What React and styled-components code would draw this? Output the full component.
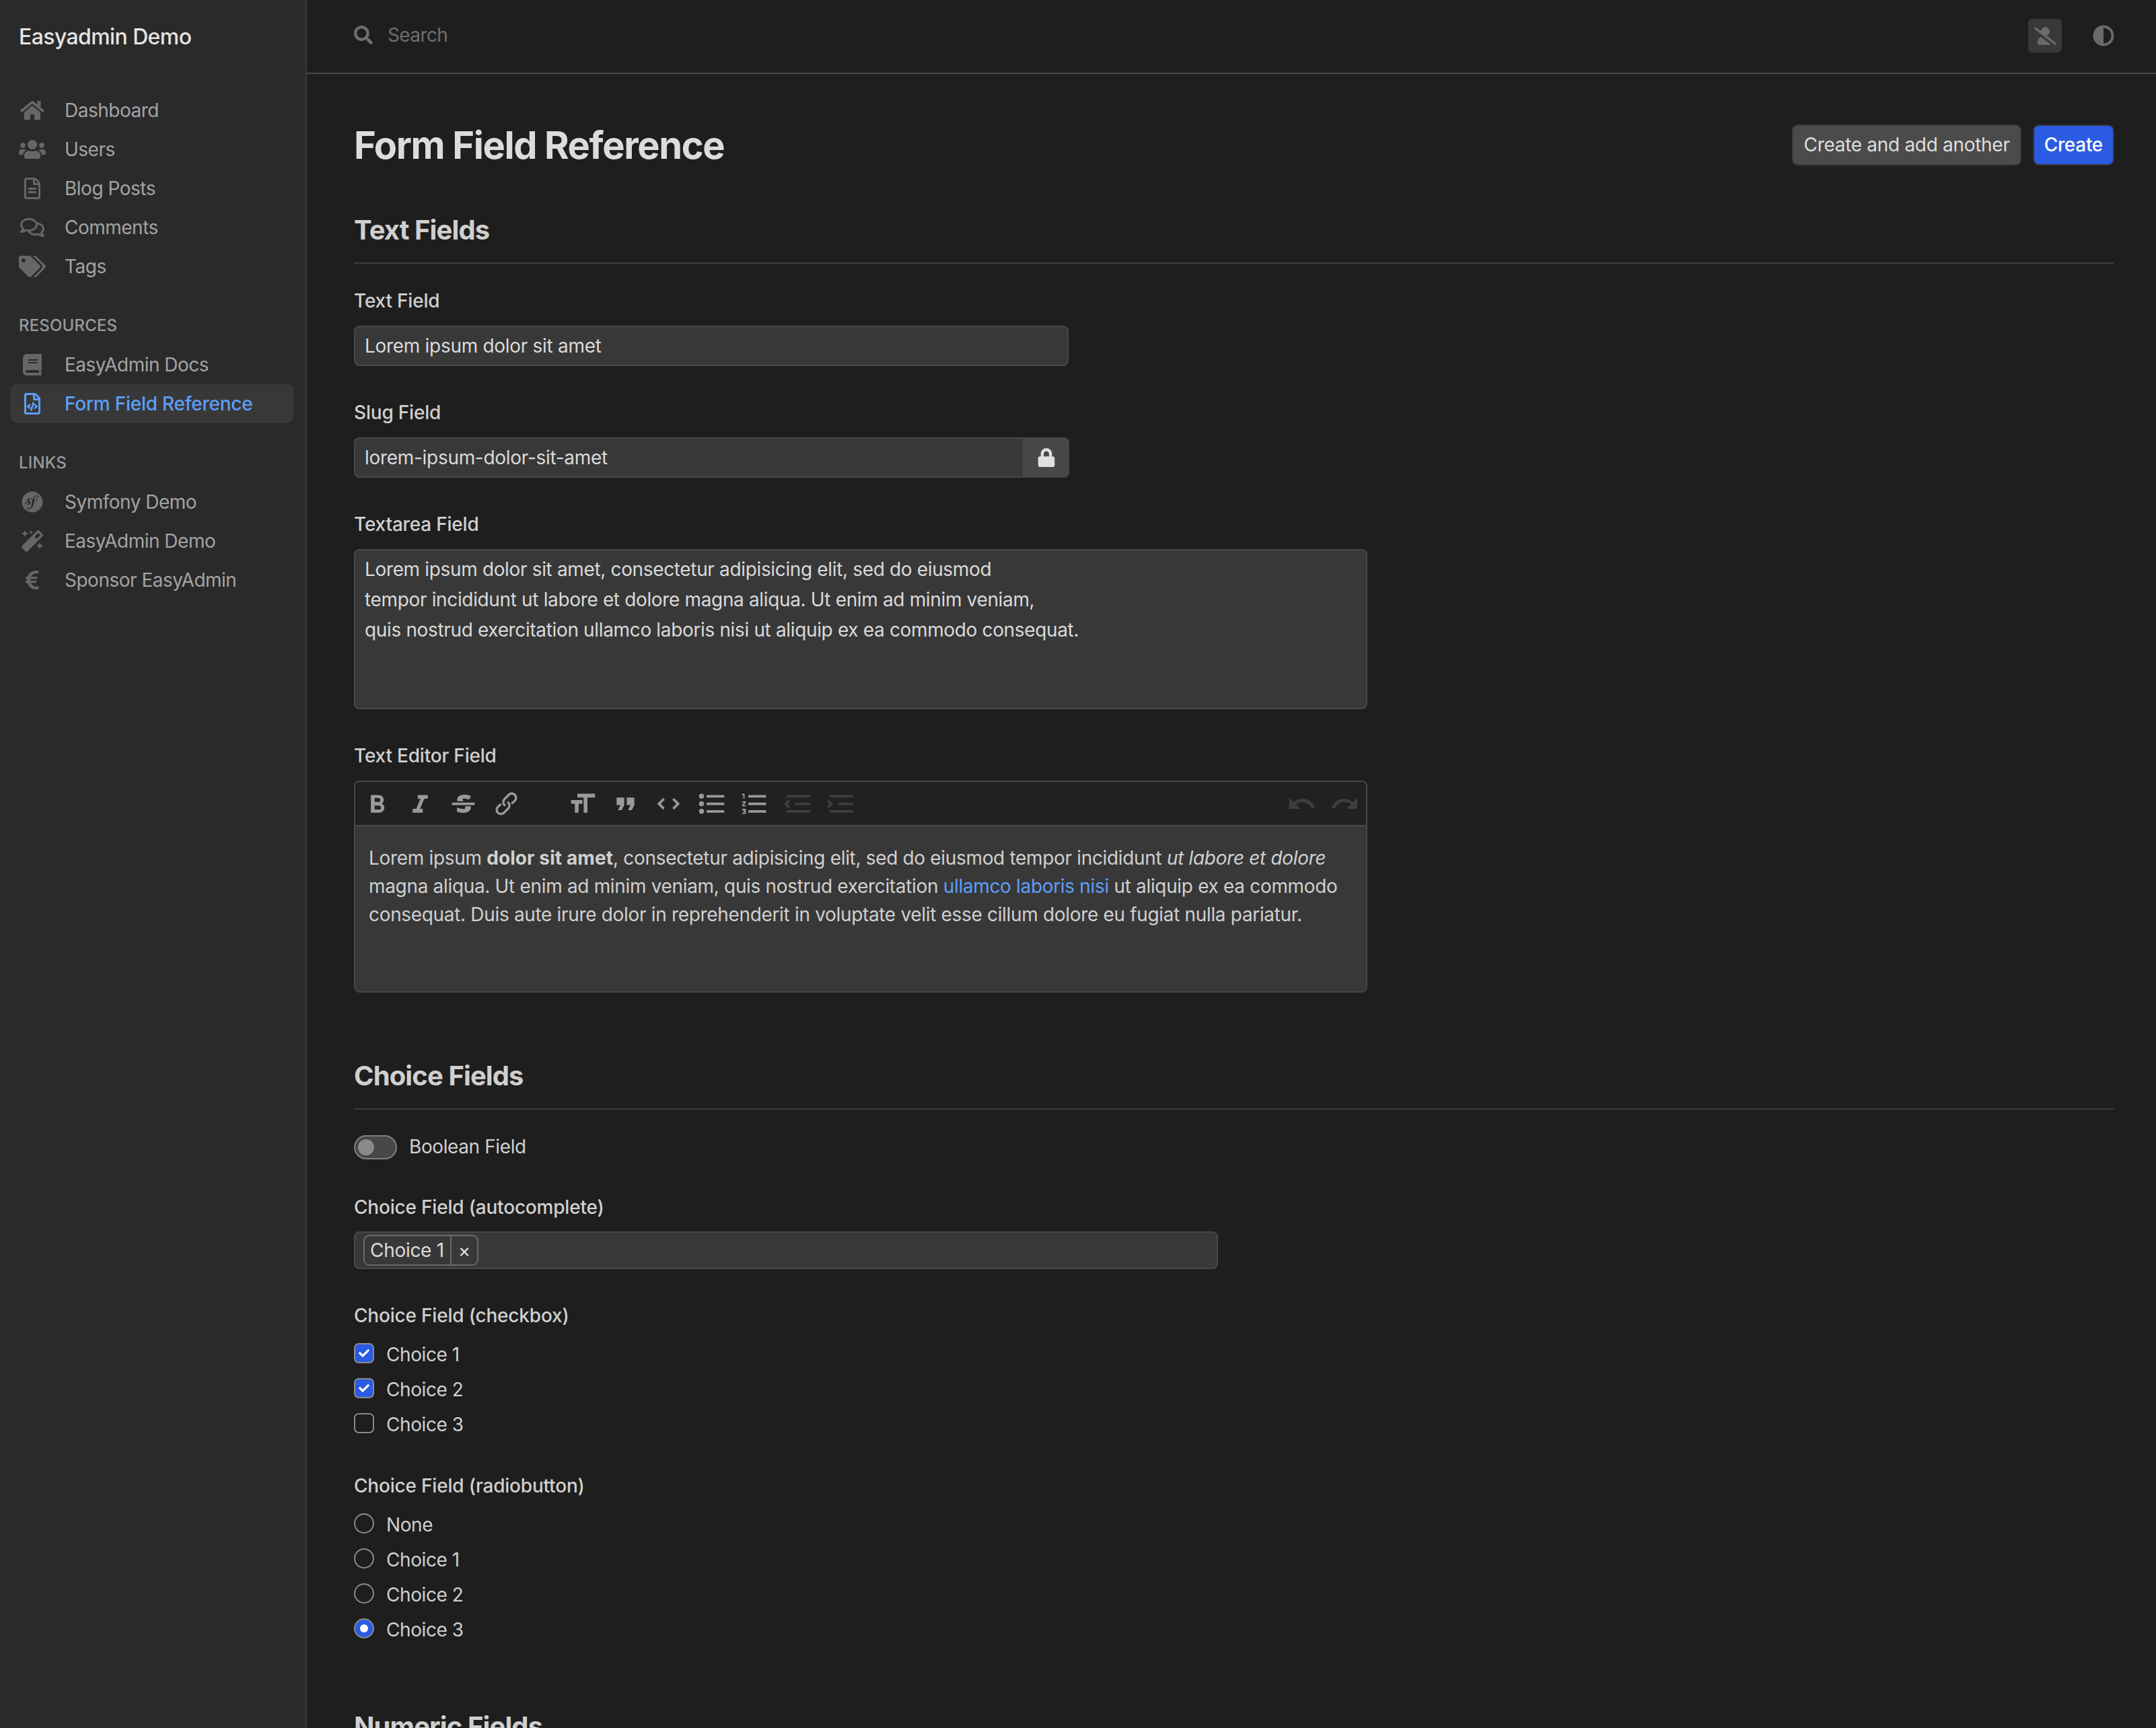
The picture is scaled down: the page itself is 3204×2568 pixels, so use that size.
import styled, { createGlobalStyle } from 'styled-components';
import {
  FaHome,
  FaUsers,
  FaRegFileAlt,
  FaRegComments,
  FaTags,
  FaBook,
  FaRegFileCode,
  FaSymfony,
  FaMagic,
  FaEuroSign,
  FaSearch,
  FaUserSlash,
  FaAdjust,
  FaLock,
  FaCheck
} from 'react-icons/fa';

const GlobalStyle = createGlobalStyle`
  html, body {
    margin: 0;
    padding: 0;
    height: 100%;
    overflow: hidden;
    background: #1e1e1e;
  }
  * {
    box-sizing: border-box;
  }
  body {
    font-family: Inter, 'Liberation Sans', sans-serif;
    font-size: 28px;
    letter-spacing: -0.3px;
    color: #d4d4d4;
  }
`;

const menu = [
  {
    items: [
      { icon: FaHome, label: 'Dashboard', size: 36 },
      { icon: FaUsers, label: 'Users', size: 40 },
      { icon: FaRegFileAlt, label: 'Blog Posts', size: 32 },
      { icon: FaRegComments, label: 'Comments', size: 36 },
      { icon: FaTags, label: 'Tags', size: 40 }
    ]
  },
  {
    title: 'Resources',
    items: [
      { icon: FaBook, label: 'EasyAdmin Docs', size: 32 },
      { icon: FaRegFileCode, label: 'Form Field Reference', size: 32, active: true }
    ]
  },
  {
    title: 'Links',
    items: [
      { icon: FaSymfony, label: 'Symfony Demo', size: 32 },
      { icon: FaMagic, label: 'EasyAdmin Demo', size: 32 },
      { icon: FaEuroSign, label: 'Sponsor EasyAdmin', size: 32 }
    ]
  }
];

const trix = {
  bold: 'M15.6 11.8c1-.7 1.6-1.8 1.6-2.8a4 4 0 0 0-4-4H7v14h7c2.1 0 3.7-1.7 3.7-3.8 0-1.5-.8-2.8-2.1-3.4zM10 7.5h3a1.5 1.5 0 1 1 0 3h-3v-3zm3.5 9H10v-3h3.5a1.5 1.5 0 1 1 0 3z',
  italic: 'M10 5v3h2.2l-3.4 8H6v3h8v-3h-2.2l3.4-8H18V5h-8z',
  strike:
    'M12.73 14l.28.14c.26.15.45.3.57.44.12.14.18.3.18.5 0 .3-.15.56-.44.75-.3.2-.76.3-1.39.3A13.52 13.52 0 0 1 7 14.95v3.37a10.64 10.64 0 0 0 4.84.88c1.26 0 2.35-.19 3.28-.56.93-.37 1.64-.9 2.14-1.57s.74-1.45.74-2.32c0-.26-.02-.51-.06-.75h-5.21zm-5.5-4c-.08-.34-.12-.7-.12-1.1 0-1.29.52-2.3 1.58-3.02 1.05-.72 2.5-1.08 4.34-1.08 1.62 0 3.28.34 4.97 1l-1.3 2.93c-1.47-.6-2.73-.9-3.8-.9-.55 0-.96.08-1.2.26-.26.17-.38.38-.38.64 0 .27.16.52.48.74.17.12.53.3 1.05.53H7.23zM3 13h18v-2H3v2z',
  link: 'M9.88 13.7a4.3 4.3 0 0 1 0-6.07l3.37-3.37a4.26 4.26 0 0 1 6.07 0 4.3 4.3 0 0 1 0 6.06l-1.96 1.72a.91.91 0 1 1-1.3-1.3l1.97-1.71a2.46 2.46 0 0 0-3.48-3.48l-3.38 3.37a2.46 2.46 0 0 0 0 3.48.91.91 0 1 1-1.29 1.3zm4.24-3.36a4.3 4.3 0 0 1 0 6.07l-3.37 3.37a4.26 4.26 0 0 1-6.07 0 4.3 4.3 0 0 1 0-6.06l1.96-1.72a.91.91 0 1 1 1.3 1.3l-1.97 1.71a2.46 2.46 0 0 0 3.48 3.48l3.38-3.37a2.46 2.46 0 0 0 0-3.48.91.91 0 1 1 1.29-1.3z',
  heading: 'M12 9v3H9v7H6v-7H3V9h9zM8 4h14v3h-6v12h-3V7H8V4z',
  quote: 'M6 17h3l2-4V7H5v6h3zm8 0h3l2-4V7h-6v6h3z',
  code: 'M18.2 12L15 15.2l1.4 1.4L21 12l-4.6-4.6L15 8.8l3.2 3.2zM5.8 12L9 8.8 7.6 7.4 3 12l4.6 4.6L9 15.2 5.8 12z',
  bullets:
    'M4 4a2 2 0 1 0 0 4 2 2 0 0 0 0-4zm0 6a2 2 0 1 0 0 4 2 2 0 0 0 0-4zm0 6a2 2 0 1 0 0 4 2 2 0 0 0 0-4zm4 3h14v-2H8v2zm0-6h14v-2H8v2zm0-8v2h14V5H8z',
  numbers:
    'M2 17h2v.5H3v1h1v.5H2v1h3v-4H2v1zm1-9h1V4H2v1h1v3zm-1 3h1.8L2 13.1v.9h3v-1H3.2L5 10.9V10H2v1zm5-6v2h14V5H7zm0 14h14v-2H7v2zm0-6h14v-2H7v2z',
  outdent: 'M3 19h19v-2H3v2zm7-6h12v-2H10v2zm-8.3-.3l2.8 2.9L6 14.2 4 12l2-2-1.4-1.5L1 12l.7.7zM3 5v2h19V5H3z',
  indent: 'M3 19h19v-2H3v2zm7-6h12v-2H10v2zm-6.9-1L1 14.2l1.4 1.4L6 12l-.7-.7-2.9-2.9L1 9.8 3.1 12zM3 5v2h19V5H3z',
  undo: 'M12.5 8c-2.6 0-5 1-6.9 2.6L2 7v9h9l-3.6-3.6A8 8 0 0 1 20 16l2.4-.8a10.5 10.5 0 0 0-10-7.2z',
  redo: 'M18.4 10.6a10.5 10.5 0 0 0-16.9 4.6L4 16a8 8 0 0 1 12.7-3.6L13 16h9V7l-3.6 3.6z'
};

const ToolIcon = ({ name, disabled }) => (
  <ToolButton $disabled={disabled}>
    <svg viewBox="0 0 24 24" width="45" height="45" fill="currentColor">
      <path d={trix[name]} />
    </svg>
  </ToolButton>
);

const App = () => (
  <Page>
    <GlobalStyle />
    <Sidebar>
      <Brand>Easyadmin Demo</Brand>
      <Nav>
        {menu.map((group, i) => (
          <div key={i}>
            {group.title && <NavTitle>{group.title}</NavTitle>}
            {group.items.map((item) => (
              <NavItem key={item.label} $active={item.active}>
                <NavIcon $active={item.active}>
                  <item.icon size={item.size} />
                </NavIcon>
                {item.label}
              </NavItem>
            ))}
          </div>
        ))}
      </Nav>
    </Sidebar>

    <Main>
      <Topbar>
        <SearchBox>
          <FaSearch size={28} />
          <span>Search</span>
        </SearchBox>
        <TopActions>
          <AvatarButton>
            <FaUserSlash size={33} />
          </AvatarButton>
          <ThemeButton>
            <FaAdjust size={32} />
          </ThemeButton>
        </TopActions>
      </Topbar>

      <Content>
        <TitleRow>
          <PageTitle>Form Field Reference</PageTitle>
          <Actions>
            <Button>Create and add another</Button>
            <Button $primary>Create</Button>
          </Actions>
        </TitleRow>

        <SectionTitle>Text Fields</SectionTitle>
        <Fields $gap={52}>
          <div>
            <Label $gap={20}>Text Field</Label>
            <TextInput $width={1062}>Lorem ipsum dolor sit amet</TextInput>
          </div>
          <div>
            <Label $gap={20}>Slug Field</Label>
            <SlugGroup>
              <SlugValue>lorem-ipsum-dolor-sit-amet</SlugValue>
              <LockAddon>
                <FaLock size={28} />
              </LockAddon>
            </SlugGroup>
          </div>
          <div>
            <Label $gap={20}>Textarea Field</Label>
            <TextArea>
              Lorem ipsum dolor sit amet, consectetur adipisicing elit, sed do eiusmod
              <br />
              tempor incididunt ut labore et dolore magna aliqua. Ut enim ad minim veniam,
              <br />
              quis nostrud exercitation ullamco laboris nisi ut aliquip ex ea commodo consequat.
            </TextArea>
          </div>
          <div>
            <Label $gap={20}>Text Editor Field</Label>
            <Editor>
              <Toolbar>
                <ToolGroups>
                  <ToolGroup>
                    <ToolIcon name="bold" />
                    <ToolIcon name="italic" />
                    <ToolIcon name="strike" />
                    <ToolIcon name="link" />
                  </ToolGroup>
                  <ToolGroup>
                    <ToolIcon name="heading" />
                    <ToolIcon name="quote" />
                    <ToolIcon name="code" />
                    <ToolIcon name="bullets" />
                    <ToolIcon name="numbers" />
                    <ToolIcon name="outdent" disabled />
                    <ToolIcon name="indent" disabled />
                  </ToolGroup>
                </ToolGroups>
                <ToolGroup>
                  <ToolIcon name="undo" disabled />
                  <ToolIcon name="redo" disabled />
                </ToolGroup>
              </Toolbar>
              <EditorBody>
                Lorem ipsum <strong>dolor sit amet</strong>, consectetur adipisicing elit, sed do eiusmod tempor
                incididunt <em>ut labore et dolore</em> magna aliqua. Ut enim ad minim veniam, quis nostrud
                exercitation <EditorLink>ullamco laboris nisi</EditorLink> ut aliquip ex ea commodo consequat. Duis
                aute irure dolor in reprehenderit in voluptate velit esse cillum dolore eu fugiat nulla pariatur.
              </EditorBody>
            </Editor>
          </div>
        </Fields>

        <SectionTitle $top={100}>Choice Fields</SectionTitle>
        <Fields $gap={0}>
          <SwitchRow>
            <Switch>
              <SwitchKnob />
            </Switch>
            <SwitchLabel>Boolean Field</SwitchLabel>
          </SwitchRow>
          <FieldBlock $top={54}>
            <Label $gap={19}>Choice Field (autocomplete)</Label>
            <AutoComplete>
              <Tag>
                <TagText>Choice 1</TagText>
                <TagRemove>×</TagRemove>
              </Tag>
            </AutoComplete>
          </FieldBlock>
          <FieldBlock $top={52}>
            <Label $gap={15}>Choice Field (checkbox)</Label>
            <OptionRow>
              <Checkbox $checked>
                <FaCheck size={16} />
              </Checkbox>
              Choice 1
            </OptionRow>
            <OptionRow>
              <Checkbox $checked>
                <FaCheck size={16} />
              </Checkbox>
              Choice 2
            </OptionRow>
            <OptionRow>
              <Checkbox />
              Choice 3
            </OptionRow>
          </FieldBlock>
          <FieldBlock $top={48}>
            <Label $gap={15}>Choice Field (radiobutton)</Label>
            <OptionRow>
              <Radio />
              None
            </OptionRow>
            <OptionRow>
              <Radio />
              Choice 1
            </OptionRow>
            <OptionRow>
              <Radio />
              Choice 2
            </OptionRow>
            <OptionRow>
              <Radio $checked />
              Choice 3
            </OptionRow>
          </FieldBlock>
        </Fields>

        <SectionTitle $top={94}>Numeric Fields</SectionTitle>
      </Content>
    </Main>
  </Page>
);

export default App;

const Page = styled.div`
  display: flex;
  height: 100vh;
  overflow: hidden;
`;

const Sidebar = styled.aside`
  width: 456px;
  flex-shrink: 0;
  background: #2a2a2a;
  border-right: 2px solid #3a3a3a;
  padding: 0 18px 0 16px;
`;

const Brand = styled.div`
  height: 108px;
  display: flex;
  align-items: center;
  padding-left: 12px;
  font-size: 32px;
  font-weight: 500;
  letter-spacing: -0.6px;
  color: #e4e4e4;
`;

const Nav = styled.nav`
  padding-top: 27px;
`;

const NavTitle = styled.div`
  padding: 42px 0 12px 12px;
  font-size: 24px;
  line-height: 34px;
  font-weight: 500;
  letter-spacing: 0.15px;
  text-transform: uppercase;
  color: #9a9a9a;
`;

const NavItem = styled.a`
  display: flex;
  align-items: center;
  height: 58px;
  padding-left: 12px;
  gap: 28px;
  border-radius: 9px;
  font-size: 28px;
  letter-spacing: ${(p) => (p.$active ? -0.25 : -0.5)}px;
  color: ${(p) => (p.$active ? '#5e9ef8' : '#a3a3a3')};
  font-weight: ${(p) => (p.$active ? 500 : 400)};
  background: ${(p) => (p.$active ? '#383838' : 'transparent')};
`;

const NavIcon = styled.span`
  width: 40px;
  display: flex;
  justify-content: center;
  color: ${(p) => (p.$active ? '#5e9ef8' : '#666666')};
`;

const Main = styled.main`
  flex: 1;
  min-width: 0;
`;

const Topbar = styled.header`
  height: 110px;
  display: flex;
  align-items: center;
  justify-content: space-between;
  padding: 0 62px 2px 70px;
  border-bottom: 2px solid #484848;
`;

const SearchBox = styled.div`
  display: flex;
  align-items: center;
  gap: 22px;
  margin-bottom: 2px;
  letter-spacing: -0.6px;
  color: #6e6e6e;
  font-size: 28px;
`;

const TopActions = styled.div`
  display: flex;
  align-items: center;
  gap: 46px;
`;

const AvatarButton = styled.div`
  width: 50px;
  height: 50px;
  border-radius: 6px;
  background: #383838;
  color: #6a6a6a;
  display: flex;
  align-items: center;
  justify-content: center;
`;

const ThemeButton = styled.div`
  display: flex;
  color: #6a6a6a;
`;

const Content = styled.div`
  padding: 74px 62px 0 70px;
`;

const TitleRow = styled.div`
  display: flex;
  align-items: center;
  justify-content: space-between;
  height: 62px;
`;

const PageTitle = styled.h1`
  margin: 2px 0 0;
  font-size: 56px;
  font-weight: 700;
  letter-spacing: -1.4px;
  color: #dcdcdc;
`;

const Actions = styled.div`
  display: flex;
  gap: 17px;
`;

const Button = styled.button`
  height: 61px;
  padding: 0 15px;
  border: 2px solid ${(p) => (p.$primary ? '#363636' : '#3c3c3c')};
  border-radius: 9px;
  background: ${(p) => (p.$primary ? '#2b5be3' : '#4b4b4b')};
  color: ${(p) => (p.$primary ? '#ffffff' : '#dedede')};
  font-family: inherit;
  font-size: 28px;
  letter-spacing: -0.3px;
  font-weight: ${(p) => (p.$primary ? 500 : 400)};
`;

const SectionTitle = styled.h2`
  margin: ${(p) => p.$top || 72}px 0 38px;
  padding-bottom: 24px;
  border-bottom: 2px solid #3c3c3c;
  font-size: 40px;
  line-height: 48px;
  font-weight: 700;
  letter-spacing: -0.9px;
  color: #cfcfcf;
`;

const Fields = styled.div`
  display: flex;
  flex-direction: column;
  gap: ${(p) => p.$gap}px;
`;

const FieldBlock = styled.div`
  margin-top: ${(p) => p.$top}px;
`;

const Label = styled.div`
  margin-bottom: ${(p) => p.$gap || 21}px;
  font-size: 28px;
  line-height: 34px;
  font-weight: 500;
  letter-spacing: -0.2px;
  color: #d0d0d0;
`;

const TextInput = styled.div`
  width: ${(p) => p.$width}px;
  height: 60px;
  display: flex;
  align-items: center;
  padding: 0 14px;
  background: #383838;
  border: 2px solid #484848;
  border-radius: 8px;
  font-size: 28px;
  color: #dadada;
`;

const SlugGroup = styled.div`
  display: flex;
  width: 1063px;
  height: 60px;
`;

const SlugValue = styled(TextInput)`
  flex: 1;
  border-radius: 8px 0 0 8px;
  border-right: none;
`;

const LockAddon = styled.div`
  width: 69px;
  display: flex;
  align-items: center;
  justify-content: center;
  background: #484848;
  border-radius: 0 8px 8px 0;
  color: #e0e0e0;
`;

const TextArea = styled.div`
  width: 1506px;
  height: 238px;
  padding: 6px 14px;
  background: #383838;
  border: 2px solid #484848;
  border-radius: 8px;
  font-size: 28px;
  line-height: 45px;
  letter-spacing: -0.35px;
  color: #dadada;
`;

const Editor = styled.div`
  width: 1506px;
  border: 2px solid #484848;
  border-radius: 8px;
  overflow: hidden;
`;

const Toolbar = styled.div`
  display: flex;
  justify-content: space-between;
  height: 66px;
  background: #212121;
  border-bottom: 2px solid #484848;
`;

const ToolGroups = styled.div`
  display: flex;
  gap: 49px;
`;

const ToolGroup = styled.div`
  display: flex;
`;

const ToolButton = styled.span`
  width: 64px;
  display: flex;
  align-items: center;
  justify-content: center;
  color: ${(p) => (p.$disabled ? '#3e3e3e' : '#9a9a9a')};
`;

const EditorBody = styled.div`
  height: 245px;
  padding: 26px 20px;
  background: #383838;
  font-size: 28px;
  line-height: 42px;
  letter-spacing: -0.33px;
  color: #d0d0d0;

  & strong {
    font-weight: 700;
    letter-spacing: 0.1px;
  }
`;

const EditorLink = styled.a`
  color: #5e9ef8;
`;

const SwitchRow = styled.div`
  display: flex;
  align-items: center;
  gap: 18px;
  font-size: 28px;
  letter-spacing: -0.4px;
  color: #d0d0d0;
`;

const SwitchLabel = styled.span`
  margin-bottom: 2px;
`;

const Switch = styled.span`
  width: 64px;
  height: 36px;
  padding: 4px;
  border: 2px solid #808080;
  border-radius: 18px;
  background: #484848;
`;

const SwitchKnob = styled.span`
  display: block;
  width: 24px;
  height: 24px;
  border-radius: 50%;
  background: #8a8a8a;
`;

const AutoComplete = styled.div`
  width: 1284px;
  height: 56px;
  display: flex;
  align-items: center;
  padding: 0 12px;
  background: #383838;
  border: 2px solid #484848;
  border-radius: 8px;
`;

const Tag = styled.div`
  height: 46px;
  display: flex;
  border: 2px solid #6a6a6a;
  border-radius: 9px;
  font-size: 28px;
  color: #dadada;
`;

const TagText = styled.span`
  display: flex;
  align-items: center;
  padding: 0 9px 0 8px;
  border-right: 2px solid #6a6a6a;
`;

const TagRemove = styled.span`
  width: 38px;
  display: flex;
  align-items: center;
  justify-content: center;
`;

const OptionRow = styled.div`
  display: flex;
  align-items: center;
  height: 52px;
  gap: 18px;
  font-size: 28px;
  letter-spacing: -0.42px;
  color: #cfcfcf;
`;

const Checkbox = styled.span`
  width: 30px;
  height: 30px;
  margin-bottom: 4px;
  display: flex;
  align-items: center;
  justify-content: center;
  border: 2px solid #8a8a8a;
  border-radius: 7px;
  background: ${(p) => (p.$checked ? '#2b5be3' : 'transparent')};
  color: #ffffff;
`;

const Radio = styled.span`
  width: 30px;
  height: 30px;
  margin-bottom: 4px;
  display: flex;
  align-items: center;
  justify-content: center;
  border: 2px solid #8a8a8a;
  border-radius: 50%;
  background: ${(p) => (p.$checked ? '#2b5be3' : 'transparent')};

  &::after {
    content: '';
    display: ${(p) => (p.$checked ? 'block' : 'none')};
    width: 12px;
    height: 12px;
    border-radius: 50%;
    background: #ffffff;
  }
`;
